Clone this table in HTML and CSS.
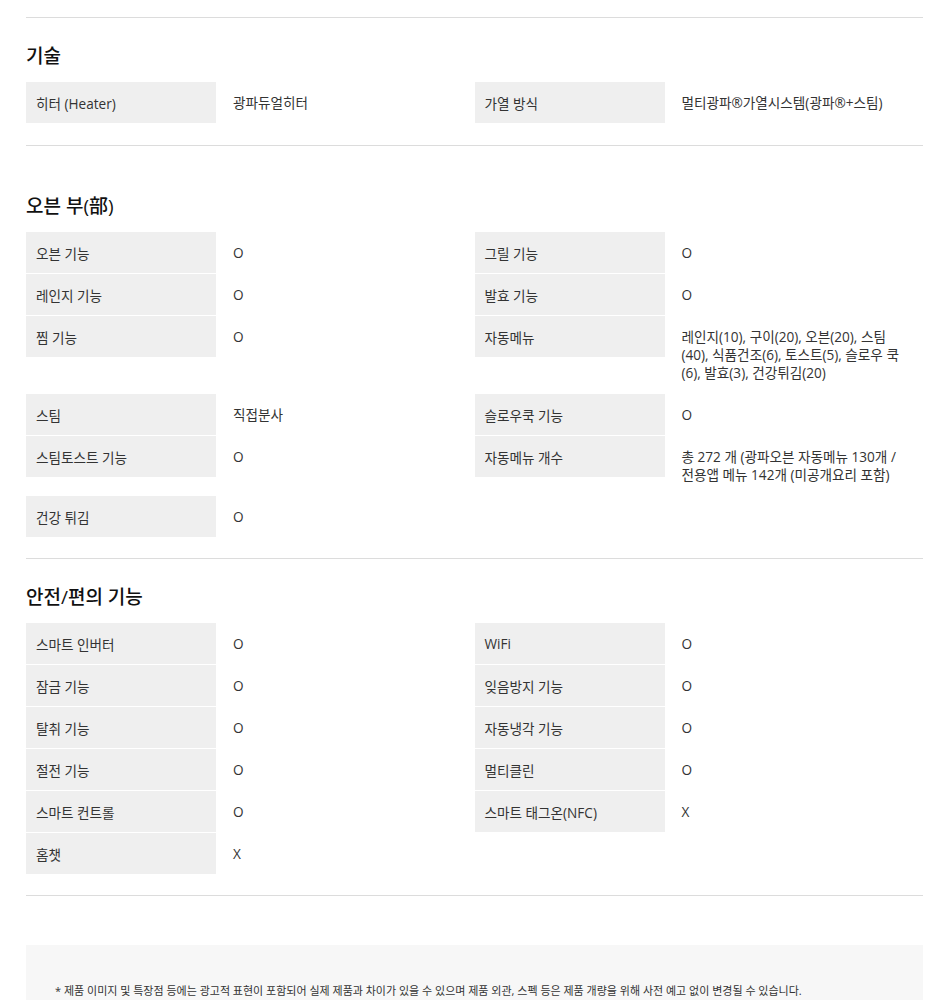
FILE: index.html
```html
<!DOCTYPE html>
<html lang="ko">
<head>
<meta charset="utf-8">
<title>제품 사양</title>
<link rel="stylesheet" href="styles.css">
</head>
<body>
<div class="spec">
  <section class="spec-section">
    <h3 class="spec-title">기술</h3>
    <div class="spec-grid">
      <div class="spec-item"><div class="spec-label">히터 (Heater)</div><div class="spec-value">광파듀얼히터</div></div>
      <div class="spec-item"><div class="spec-label">가열 방식</div><div class="spec-value">멀티광파®가열시스템(광파®+스팀)</div></div>
    </div>
  </section>

  <section class="spec-section spec-section--wide">
    <h3 class="spec-title">오븐 부(部)</h3>
    <div class="spec-grid">
      <div class="spec-item"><div class="spec-label">오븐 기능</div><div class="spec-value">O</div></div>
      <div class="spec-item"><div class="spec-label">그릴 기능</div><div class="spec-value">O</div></div>
      <div class="spec-item"><div class="spec-label">레인지 기능</div><div class="spec-value">O</div></div>
      <div class="spec-item"><div class="spec-label">발효 기능</div><div class="spec-value">O</div></div>
      <div class="spec-item"><div class="spec-label">찜 기능</div><div class="spec-value">O</div></div>
      <div class="spec-item"><div class="spec-label">자동메뉴</div><div class="spec-value">레인지(10), 구이(20), 오븐(20), 스팀(40), 식품건조(6), 토스트(5), 슬로우 쿡(6), 발효(3), 건강튀김(20)</div></div>
      <div class="spec-item"><div class="spec-label">스팀</div><div class="spec-value">직접분사</div></div>
      <div class="spec-item"><div class="spec-label">슬로우쿡 기능</div><div class="spec-value">O</div></div>
      <div class="spec-item"><div class="spec-label">스팀토스트 기능</div><div class="spec-value">O</div></div>
      <div class="spec-item"><div class="spec-label">자동메뉴 개수</div><div class="spec-value">총 272 개 (광파오븐 자동메뉴 130개 / 전용앱 메뉴 142개 (미공개요리 포함)</div></div>
      <div class="spec-item"><div class="spec-label">건강 튀김</div><div class="spec-value">O</div></div>
    </div>
  </section>

  <section class="spec-section spec-section--last">
    <h3 class="spec-title">안전/편의 기능</h3>
    <div class="spec-grid">
      <div class="spec-item"><div class="spec-label">스마트 인버터</div><div class="spec-value">O</div></div>
      <div class="spec-item"><div class="spec-label">WiFi</div><div class="spec-value">O</div></div>
      <div class="spec-item"><div class="spec-label">잠금 기능</div><div class="spec-value">O</div></div>
      <div class="spec-item"><div class="spec-label">잊음방지 기능</div><div class="spec-value">O</div></div>
      <div class="spec-item"><div class="spec-label">탈취 기능</div><div class="spec-value">O</div></div>
      <div class="spec-item"><div class="spec-label">자동냉각 기능</div><div class="spec-value">O</div></div>
      <div class="spec-item"><div class="spec-label">절전 기능</div><div class="spec-value">O</div></div>
      <div class="spec-item"><div class="spec-label">멀티클린</div><div class="spec-value">O</div></div>
      <div class="spec-item"><div class="spec-label">스마트 컨트롤</div><div class="spec-value">O</div></div>
      <div class="spec-item"><div class="spec-label">스마트 태그온(NFC)</div><div class="spec-value">X</div></div>
      <div class="spec-item"><div class="spec-label">홈챗</div><div class="spec-value">X</div></div>
    </div>
  </section>

  <div class="spec-note">
    <p>* 제품 이미지 및 특장점 등에는 광고적 표현이 포함되어 실제 제품과 차이가 있을 수 있으며 제품 외관, 스펙 등은 제품 개량을 위해 사전 예고 없이 변경될 수 있습니다.</p>
  </div>
</div>
</body>
</html>
```

FILE: styles.css
```css
html, body {
  margin: 0;
  padding: 0;
  background: #fff;
}

body {
  font-family: "Open Sans", "Noto Sans CJK KR", sans-serif;
  color: #333;
}

.spec {
  padding: 17px 27px 0 26px;
}

.spec-section {
  border-top: 1px solid #dcdcdc;
  padding: 24px 0 22px;
}

.spec-section--wide {
  padding-top: 46px;
  padding-bottom: 21px;
}

.spec-section--last {
  border-bottom: 1px solid #dcdcdc;
  padding-bottom: 21px;
}

.spec-title {
  margin: 0 0 12px;
  font-size: 19px;
  line-height: 28px;
  font-weight: 500;
  color: #111;
}

.spec-grid {
  display: grid;
  grid-template-columns: 1fr 1fr;
  row-gap: 1px;
}

.spec-item {
  display: flex;
  align-items: flex-start;
}

.spec-label {
  flex: 0 0 190px;
  box-sizing: border-box;
  height: 41px;
  padding: 0 10px;
  display: flex;
  align-items: center;
  background: #efefef;
  font-size: 13.6px;
  color: #333;
}

.spec-value {
  flex: 1;
  padding: 12px 12px 11px 17px;
  font-size: 13.6px;
  line-height: 18px;
  color: #333;
  word-break: keep-all;
}

.spec-note {
  margin-top: 49px;
  background: #f7f7f7;
  padding: 38px 29px 20px;
}

.spec-note p {
  margin: 0;
  font-size: 11px;
  line-height: 16px;
  letter-spacing: 0;
  color: #333;
}
```
